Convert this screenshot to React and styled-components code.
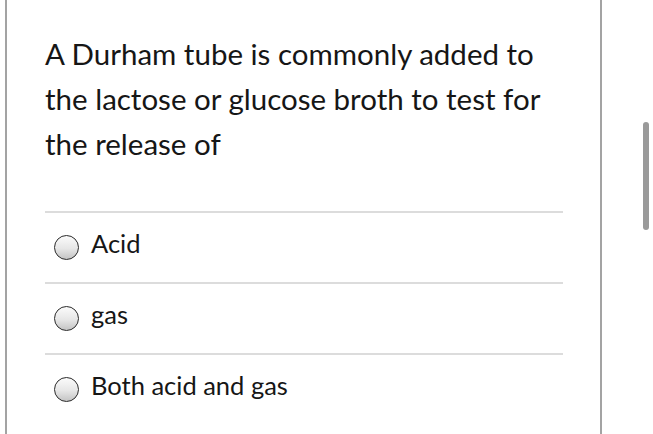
import React from "react";
import styled, { createGlobalStyle } from "styled-components";

const Global = createGlobalStyle`
  html, body { margin: 0; padding: 0; background: #fff; }
  body { width: 653px; height: 434px; overflow: hidden; }
`;

const Page = styled.div`
  display: flex;
  width: 653px;
  height: 434px;
  background: #fff;
  font-family: Lato, "Open Sans", sans-serif;
  color: #161616;
`;

const Card = styled.div`
  margin-left: 5px;
  width: 597px;
  height: 434px;
  box-sizing: border-box;
  border-left: 2px solid #a3a3a3;
  border-right: 2px solid #a3a3a3;
  padding: 31px 30px 0 38px;
  display: flex;
  flex-direction: column;
`;

const Question = styled.p`
  margin: 0;
  font-size: 29.5px;
  line-height: 45px;
`;

const Options = styled.div`
  margin-top: 45px;
  margin-right: 7px;
  display: flex;
  flex-direction: column;
`;

const Option = styled.label`
  display: flex;
  align-items: center;
  gap: 12px;
  height: 71px;
  box-sizing: border-box;
  border-top: 2px solid #dcdcdc;
  padding: 0 0 10px 9px;
  font-size: 25.5px;
`;

const Radio = styled.span`
  width: 25px;
  height: 25px;
  box-sizing: border-box;
  border-radius: 50%;
  border: 1.6px solid #2a2a2a;
  background: linear-gradient(180deg, #fbfbfb 0%, #e6e6e6 55%, #c4c4c4 100%);
  margin-top: 10px;
  flex-shrink: 0;
`;

const Track = styled.div`
  margin-left: 41px;
  padding-top: 122px;
`;

const Thumb = styled.div`
  width: 6px;
  height: 108px;
  border-radius: 3px;
  background: #9a9a9a;
`;

const options = ["Acid", "gas", "Both acid and gas"];

export default function App() {
  return (
    <Page>
      <Global />
      <Card>
        <Question>
          A Durham tube is commonly added to the lactose or glucose broth to test for the release of
        </Question>
        <Options>
          {options.map((o) => (
            <Option key={o}>
              <Radio />
              {o}
            </Option>
          ))}
        </Options>
      </Card>
      <Track>
        <Thumb />
      </Track>
    </Page>
  );
}
